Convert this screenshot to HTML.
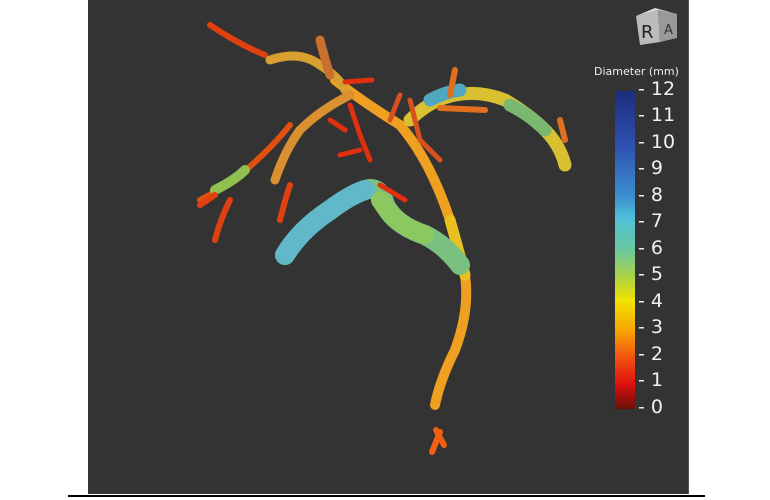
<!DOCTYPE html>
<html><head><style>
body{margin:0;width:770px;height:500px;background:#fff;position:relative;overflow:hidden;font-family:"DejaVu Sans","Liberation Sans",sans-serif}
#p{position:absolute;left:88px;top:0;width:600px;height:494px;background:#333;border-right:1px solid #555}
#ln{position:absolute;left:68px;top:495px;width:637px;height:2px;background:#000}
.lb{position:absolute;left:638px;color:#f0f0f0;font-size:19px;line-height:18px}
</style></head><body>
<div id="p"></div><div id="ln"></div>
<svg width="770" height="500" style="position:absolute;left:0;top:0">
<defs>
<linearGradient id="cb" x1="0" y1="0" x2="0" y2="1">
<stop offset="0" stop-color="#1c2d7a"/><stop offset="0.17" stop-color="#2e4fb0"/>
<stop offset="0.33" stop-color="#3b8fd0"/><stop offset="0.4" stop-color="#4fc0d8"/>
<stop offset="0.5" stop-color="#6cc7a0"/><stop offset="0.58" stop-color="#a9d24a"/>
<stop offset="0.66" stop-color="#f2e200"/><stop offset="0.75" stop-color="#f7a800"/>
<stop offset="0.83" stop-color="#f25a10"/><stop offset="0.92" stop-color="#e01010"/>
<stop offset="1" stop-color="#6a1008"/></linearGradient>
</defs>
<rect x="615" y="91" width="20" height="318" fill="url(#cb)"/>
<g fill="none" stroke-linecap="round" stroke-linejoin="round">
<path d="M335 80 Q360 100 400 125 Q430 160 450 220 Q460 255 465 275 Q470 310 455 350 Q440 380 435 405" stroke="#f0a020" stroke-width="10"/>
<path d="M450 220 Q460 255 465 275" stroke="#e8c020" stroke-width="11"/>
<path d="M436 430 L444 445 M440 432 L432 452" stroke="#f06010" stroke-width="6"/>
<path d="M285 255 Q300 230 330 210 Q350 195 365 190 Q380 185 385 205 Q395 225 425 235 Q445 245 460 265" stroke="#7ac080" stroke-width="20"/>
<path d="M285 255 Q300 230 330 210 Q350 195 365 190" stroke="#60b8c8" stroke-width="20"/>
<path d="M380 200 Q395 225 425 235" stroke="#8cc860" stroke-width="18"/>
<path d="M410 120 Q430 100 455 95 Q480 90 505 100 Q530 115 545 130 Q560 145 565 165" stroke="#d8c030" stroke-width="13"/>
<path d="M430 100 Q445 92 460 90" stroke="#50a8c0" stroke-width="13"/>
<path d="M510 105 Q530 115 545 130" stroke="#7ab870" stroke-width="13"/>
<path d="M440 108 L485 110 M455 70 L450 95 M560 120 L565 140" stroke="#e07020" stroke-width="6"/>
<path d="M210 25 Q240 45 265 55" stroke="#e04010" stroke-width="6"/>
<path d="M270 60 Q300 50 320 65 Q340 78 345 90" stroke="#d8a030" stroke-width="9"/>
<path d="M320 40 Q325 60 330 75" stroke="#c87030" stroke-width="9"/>
<path d="M350 95 Q320 110 300 130 Q285 150 275 180" stroke="#d89030" stroke-width="9"/>
<path d="M290 125 Q270 150 240 175 Q220 190 200 200" stroke="#e05010" stroke-width="6"/>
<path d="M245 170 Q235 180 215 190" stroke="#90c050" stroke-width="10"/>
<path d="M215 240 Q220 220 230 200 M200 205 L215 195 M290 185 Q285 200 280 220" stroke="#e04010" stroke-width="6"/>
<path d="M350 105 L360 135 L370 160 M340 155 L360 150 M380 185 L405 200 M345 82 L372 80" stroke="#e03010" stroke-width="5"/>
<path d="M400 95 L390 120 M410 100 L420 140 L440 160" stroke="#d85020" stroke-width="5"/>
<path d="M330 120 L345 130" stroke="#e03010" stroke-width="5"/>
</g>
<g>
<polygon points="636,16 658,10 660,42 640,45" fill="#bbb"/>
<polygon points="658,10 677,14 677,38 660,42" fill="#999"/>
<polygon points="636,16 655,8 677,14 658,10" fill="#ddd"/>
<text x="641" y="38" font-size="18" fill="#222" font-family="DejaVu Sans">R</text>
<text x="664" y="34" font-size="13" fill="#333" font-family="DejaVu Sans">A</text>
</g>
<text x="594" y="75" font-size="11" fill="#eee" font-family="DejaVu Sans">Diameter (mm)</text>
</svg>
<div class="lb" style="top:80px">- 12</div>
<div class="lb" style="top:106px">- 11</div>
<div class="lb" style="top:133px">- 10</div>
<div class="lb" style="top:159px">- 9</div>
<div class="lb" style="top:186px">- 8</div>
<div class="lb" style="top:212px">- 7</div>
<div class="lb" style="top:239px">- 6</div>
<div class="lb" style="top:265px">- 5</div>
<div class="lb" style="top:292px">- 4</div>
<div class="lb" style="top:318px">- 3</div>
<div class="lb" style="top:345px">- 2</div>
<div class="lb" style="top:371px">- 1</div>
<div class="lb" style="top:398px">- 0</div>
</body></html>
